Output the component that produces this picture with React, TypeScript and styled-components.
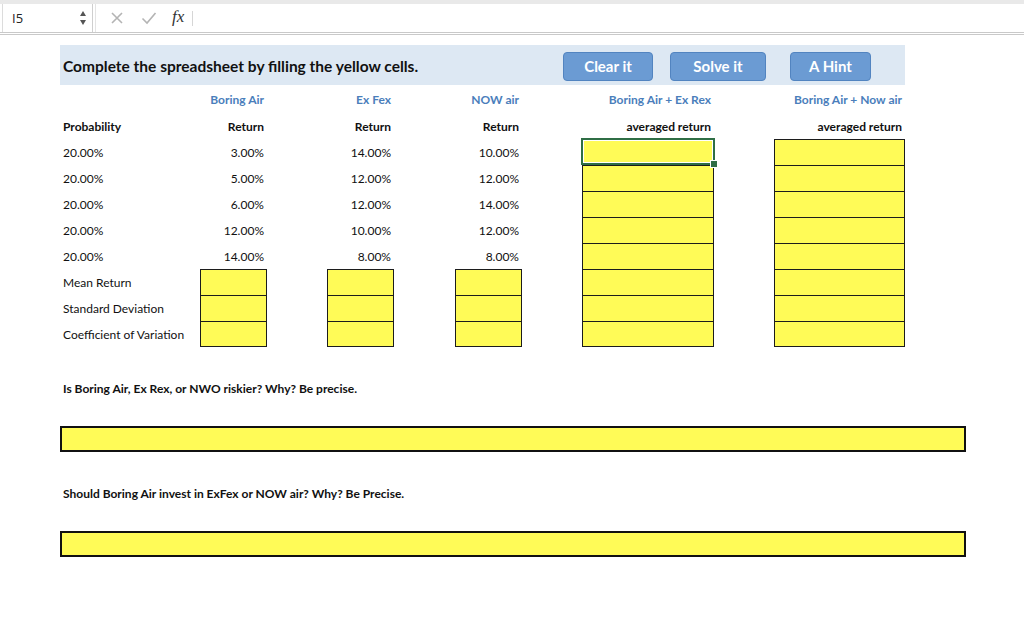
import styled, { createGlobalStyle } from "styled-components";

const GlobalStyle = createGlobalStyle`
  html, body {
    margin: 0;
    padding: 0;
    background: #ffffff;
  }
  body {
    font-family: Lato, "Open Sans", "Liberation Sans", sans-serif;
    color: #111;
  }
`;

const COLUMNS = "60px 140px 67px 60px 67px 61px 67px 60px 132px 60px 131px";

type Col = {
  text?: string;
  align?: "left" | "right";
  tone?: "blue" | "dark";
  bold?: boolean;
  fill?: boolean;
  last?: boolean;
  active?: boolean;
};

const returns = [
  ["20.00%", "3.00%", "14.00%", "10.00%"],
  ["20.00%", "5.00%", "12.00%", "12.00%"],
  ["20.00%", "6.00%", "12.00%", "14.00%"],
  ["20.00%", "12.00%", "10.00%", "12.00%"],
  ["20.00%", "14.00%", "8.00%", "8.00%"],
];

const stats = ["Mean Return", "Standard Deviation", "Coefficient of Variation"];

const blank: Col = {};

const headerRow: Col[] = [
  blank,
  blank,
  { text: "Boring Air", align: "right", tone: "blue", bold: true },
  blank,
  { text: "Ex Fex", align: "right", tone: "blue", bold: true },
  blank,
  { text: "NOW air", align: "right", tone: "blue", bold: true },
  blank,
  { text: "Boring Air + Ex Rex", align: "right", tone: "blue", bold: true },
  blank,
  { text: "Boring Air + Now air", align: "right", tone: "blue", bold: true },
];

const labelRow: Col[] = [
  blank,
  { text: "Probability", bold: true },
  { text: "Return", align: "right", bold: true },
  blank,
  { text: "Return", align: "right", bold: true },
  blank,
  { text: "Return", align: "right", bold: true },
  blank,
  { text: "averaged return", align: "right", bold: true },
  blank,
  { text: "averaged return", align: "right", bold: true },
];

const buildRows = (): Col[][] => {
  const rows: Col[][] = [headerRow, labelRow];
  returns.forEach((r, i) => {
    rows.push([
      blank,
      { text: r[0] },
      { text: r[1], align: "right" },
      blank,
      { text: r[2], align: "right" },
      blank,
      { text: r[3], align: "right" },
      blank,
      { fill: true, active: i === 0 },
      blank,
      { fill: true },
    ]);
  });
  stats.forEach((label, i) => {
    const last = i === stats.length - 1;
    rows.push([
      blank,
      { text: label },
      { fill: true, last },
      blank,
      { fill: true, last },
      blank,
      { fill: true, last },
      blank,
      { fill: true, last },
      blank,
      { fill: true, last },
    ]);
  });
  return rows;
};

const App = () => {
  const rows = buildRows();
  return (
    <>
      <GlobalStyle />
      <Page>
        <FormulaBar>
          <NameBox>
            <span>I5</span>
            <Spinner>
              <Arrow $up />
              <Arrow />
            </Spinner>
          </NameBox>
          <BarIcons>
            <svg width="14" height="14" viewBox="0 0 14 14">
              <path d="M2 2 L12 12 M12 2 L2 12" stroke="#b4b4b4" strokeWidth="1.6" fill="none" />
            </svg>
            <svg width="16" height="14" viewBox="0 0 16 14">
              <path d="M1.5 7.5 L6 12 L14.5 2" stroke="#b4b4b4" strokeWidth="1.6" fill="none" />
            </svg>
            <Fx>fx</Fx>
            <BarDivider />
          </BarIcons>
        </FormulaBar>

        <Sheet>
          <Band>
            <Title>Complete the spreadsheet by filling the yellow cells.</Title>
            <ButtonGroup>
              <SheetButton $width={90}>Clear it</SheetButton>
              <SheetButton $width={96} $gap={17}>
                Solve it
              </SheetButton>
              <SheetButton $width={81} $gap={24}>
                A Hint
              </SheetButton>
            </ButtonGroup>
          </Band>

          {rows.map((row, r) => (
            <Row key={r} $tall={r === 0}>
              {row.map((c, k) => (
                <Cell
                  key={k}
                  $align={c.align}
                  $tone={c.tone}
                  $bold={c.bold}
                  $fill={c.fill}
                  $last={c.last}
                  $active={c.active}
                >
                  {c.text}
                </Cell>
              ))}
            </Row>
          ))}

          <Questions>
            <Question>Is Boring Air, Ex Rex, or NWO riskier? Why? Be precise.</Question>
            <AnswerBox />
            <Question>Should Boring Air invest in ExFex or NOW air? Why? Be Precise.</Question>
            <AnswerBox />
          </Questions>
        </Sheet>
      </Page>
    </>
  );
};

export default App;

const Page = styled.div`
  width: 1024px;
  height: 639px;
  overflow: hidden;
  background: #fff;
`;

const FormulaBar = styled.div`
  display: flex;
  align-items: stretch;
  height: 28px;
  border-top: 4px solid #e9e9e9;
  border-bottom: 3px double #c9c9c9;
  background: #fff;
`;

const NameBox = styled.div`
  display: flex;
  align-items: center;
  justify-content: space-between;
  width: 74px;
  margin-left: 2px;
  padding: 0 6px 0 9px;
  border-left: 1px solid #dcdcdc;
  border-right: 1px solid #cfcfcf;
  font-family: "Open Sans", Lato, sans-serif;
  font-size: 13px;
  color: #222;
`;

const Spinner = styled.div`
  display: flex;
  flex-direction: column;
  gap: 4px;
`;

const Arrow = styled.div<{ $up?: boolean }>`
  width: 0;
  height: 0;
  border-left: 3.5px solid transparent;
  border-right: 3.5px solid transparent;
  ${(p) => (p.$up ? "border-bottom: 5px solid #555;" : "border-top: 5px solid #555;")}
`;

const BarIcons = styled.div`
  display: flex;
  align-items: center;
  gap: 17px;
  padding-left: 14px;
  border-left: 1px solid #e4e4e4;
  margin-left: 2px;
`;

const Fx = styled.span`
  font-family: "Liberation Serif", "DejaVu Serif", serif;
  font-style: italic;
  font-size: 17px;
  color: #333;
  margin-left: -2px;
  margin-top: -3px;
`;

const BarDivider = styled.div`
  width: 1px;
  height: 15px;
  background: #d6d6d6;
  margin-left: -9px;
`;

const Sheet = styled.div`
  padding-top: 10px;
`;

const Band = styled.div`
  display: flex;
  align-items: center;
  margin-left: 60px;
  width: 845px;
  height: 40px;
  background: #dde8f3;
`;

const Title = styled.div`
  flex: 1;
  padding-left: 3px;
  font-size: 15.5px;
  font-weight: 700;
  color: #111;
  padding-top: 1px;
`;

const ButtonGroup = styled.div`
  display: flex;
  align-items: center;
  padding-right: 34px;
`;

const SheetButton = styled.button<{ $width: number; $gap?: number }>`
  width: ${(p) => p.$width}px;
  height: 29px;
  margin-left: ${(p) => p.$gap ?? 0}px;
  margin-top: 2px;
  border: 1px solid #5284c0;
  border-radius: 4px;
  background: #6b9bd3;
  color: #fff;
  font-family: Lato, "Open Sans", sans-serif;
  font-size: 15px;
  font-weight: 700;
  padding: 0;
`;

const Row = styled.div<{ $tall?: boolean }>`
  display: grid;
  grid-template-columns: ${COLUMNS};
  height: ${(p) => (p.$tall ? 28 : 26)}px;
`;

const Cell = styled.div<{
  $align?: "left" | "right";
  $tone?: "blue" | "dark";
  $bold?: boolean;
  $fill?: boolean;
  $last?: boolean;
  $active?: boolean;
}>`
  position: relative;
  display: flex;
  align-items: center;
  justify-content: ${(p) => (p.$align === "right" ? "flex-end" : "flex-start")};
  padding: ${(p) => (p.$align === "right" ? "0 3px 0 0" : "0 0 0 3px")};
  font-size: 12px;
  font-weight: ${(p) => (p.$bold ? 700 : 400)};
  color: ${(p) => (p.$tone === "blue" ? "#4a7ebb" : "#111")};
  white-space: nowrap;
  box-sizing: border-box;
  ${(p) =>
    p.$fill &&
    `
    background: #fffb57;
    border-left: 1px solid #1c1c1c;
    border-right: 1px solid #1c1c1c;
    border-top: 1px solid #1c1c1c;
  `}
  ${(p) => p.$last && "border-bottom: 1px solid #1c1c1c;"}
  ${(p) =>
    p.$active &&
    `
    border: 2px solid #2f6e45;
    box-shadow: inset 0 0 0 1px #ffffff;
    margin: -1px -1px 0 -1px;
    z-index: 1;
    &::after {
      content: "";
      position: absolute;
      right: -5px;
      bottom: -5px;
      width: 6px;
      height: 6px;
      background: #2f6e45;
      border: 1px solid #fff;
    }
  `}
`;

const Questions = styled.div`
  display: flex;
  flex-direction: column;
  padding-left: 60px;
  padding-top: 28px;
`;

const Question = styled.div`
  display: flex;
  align-items: center;
  height: 26px;
  padding-left: 3px;
  font-size: 12px;
  font-weight: 700;
  color: #111;
`;

const AnswerBox = styled.div`
  width: 906px;
  height: 26px;
  box-sizing: border-box;
  margin: 25px 0 28px;
  background: #fffb57;
  border: 2px solid #111;
`;
